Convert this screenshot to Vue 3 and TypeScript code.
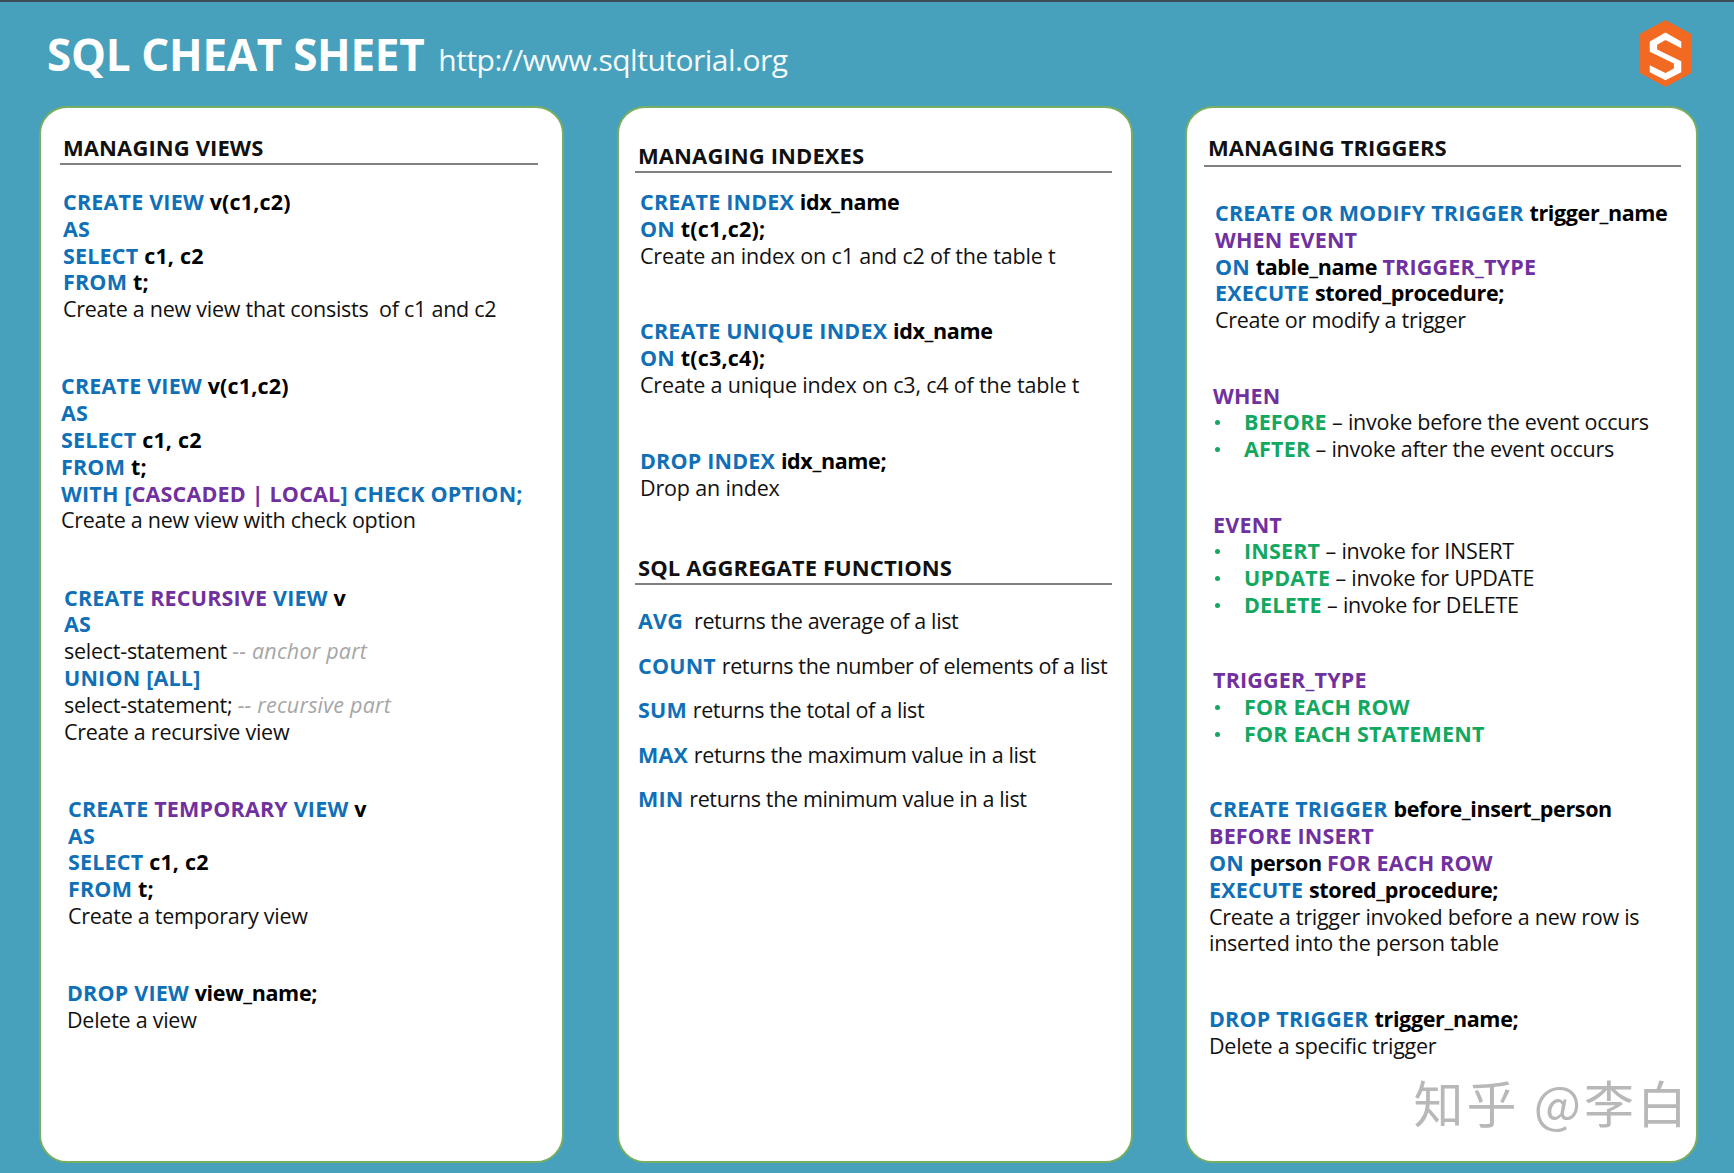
<script setup lang="ts">
type Seg = [string, string]
type Block = { indent: number; lines: Seg[][] }

const b = (text: string): Seg => ['blue', text]
const p = (text: string): Seg => ['purple', text]
const k = (text: string): Seg => ['black', text]
const id = (text: string): Seg => ['black ident', text]
const t = (text: string): Seg => ['plain', text]
const c = (text: string): Seg => ['comment', text]
const g = (text: string): Seg => ['green', text]

const views: Block[] = [
  { indent: 3, lines: [[b('CREATE VIEW '), k('v(c1,c2)')], [b('AS')], [b('SELECT '), k('c1, c2')], [b('FROM '), k('t;')], [t('Create a new view that consists  of c1 and c2')]] },
  { indent: 1, lines: [[b('CREATE VIEW '), k('v(c1,c2)')], [b('AS')], [b('SELECT '), k('c1, c2')], [b('FROM '), k('t;')], [b('WITH ['), p('CASCADED | LOCAL'), b('] CHECK OPTION;')], [t('Create a new view with check option')]] },
  { indent: 4, lines: [[b('CREATE '), p('RECURSIVE'), b(' VIEW '), k('v')], [b('AS')], [t('select-statement '), c('-- anchor part')], [b('UNION [ALL]')], [t('select-statement; '), c('-- recursive part')], [t('Create a recursive view')]] },
  { indent: 8, lines: [[b('CREATE '), p('TEMPORARY'), b(' VIEW '), k('v')], [b('AS')], [b('SELECT '), k('c1, c2')], [b('FROM '), k('t;')], [t('Create a temporary view')]] },
  { indent: 7, lines: [[b('DROP VIEW '), id('view_name;')], [t('Delete a view')]] },
]

const indexes: Block[] = [
  { indent: 5, lines: [[b('CREATE INDEX '), id('idx_name')], [b('ON '), k('t(c1,c2);')], [t('Create an index on c1 and c2 of the table t')]] },
  { indent: 5, lines: [[b('CREATE UNIQUE INDEX '), id('idx_name')], [b('ON '), k('t(c3,c4);')], [t('Create a unique index on c3, c4 of the table t')]] },
  { indent: 5, lines: [[b('DROP INDEX '), id('idx_name;')], [t('Drop an index')]] },
]

const aggregates: Seg[][] = [
  [b('AVG '), t(' returns the average of a list')],
  [b('COUNT '), t('returns the number of elements of a list')],
  [b('SUM '), t('returns the total of a list')],
  [b('MAX '), t('returns the maximum value in a list')],
  [b('MIN '), t('returns the minimum value in a list')],
]

const triggers: Block[] = [
  { indent: 11, lines: [[b('CREATE OR MODIFY TRIGGER '), id('trigger_name')], [p('WHEN EVENT')], [b('ON '), id('table_name '), p('TRIGGER_TYPE')], [b('EXECUTE '), id('stored_procedure;')], [t('Create or modify a trigger')]] },
  { indent: 9, lines: [[p('WHEN')], [g('BEFORE'), t(' – invoke before the event occurs')], [g('AFTER'), t(' – invoke after the event occurs')]] },
  { indent: 9, lines: [[p('EVENT')], [g('INSERT'), t(' – invoke for INSERT')], [g('UPDATE'), t(' – invoke for UPDATE')], [g('DELETE'), t(' – invoke for DELETE')]] },
  { indent: 9, lines: [[p('TRIGGER_TYPE')], [g('FOR EACH ROW')], [g('FOR EACH STATEMENT')]] },
  { indent: 5, lines: [[b('CREATE TRIGGER '), id('before_insert_person')], [p('BEFORE INSERT')], [b('ON '), id('person '), p('FOR EACH ROW')], [b('EXECUTE '), id('stored_procedure;')], [t('Create a trigger invoked before a new row is')], [t('inserted into the person table')]] },
  { indent: 5, lines: [[b('DROP TRIGGER '), id('trigger_name;')], [t('Delete a specific trigger')]] },
]

const isBullet = (line: Seg[]) => line[0][0] === 'green'
</script>

<template>
  <div class="sheet">
    <header class="top">
      <h1 class="title">SQL CHEAT SHEET</h1>
      <span class="url">http://www.sqltutorial.org</span>
      <svg class="logo" viewBox="28 20 154 200" aria-hidden="true">
        <polygon fill="#f26a21" points="105,20 182,62 182,178 105,220 28,178 28,62" />
        <polygon fill="#fff" points="105,57 152,84 152,104 105,80 80,94 80,108 152,143 152,176 105,200 58,176 58,155 105,178 130,165 130,150 58,115 58,84" />
      </svg>
    </header>

    <main class="cards">
      <section class="card views">
        <h2 class="heading">MANAGING VIEWS</h2>
        <div class="blocks">
          <div v-for="(block, i) in views" :key="i" class="block" :style="{ marginLeft: block.indent + 'px' }">
            <div v-for="(line, j) in block.lines" :key="j" class="line">
              <span v-for="(seg, n) in line" :key="n" :class="seg[0]">{{ seg[1] }}</span>
            </div>
          </div>
        </div>
      </section>

      <section class="card indexes">
        <h2 class="heading">MANAGING INDEXES</h2>
        <div class="blocks">
          <div v-for="(block, i) in indexes" :key="i" class="block" :style="{ marginLeft: block.indent + 'px' }">
            <div v-for="(line, j) in block.lines" :key="j" class="line">
              <span v-for="(seg, n) in line" :key="n" :class="seg[0]">{{ seg[1] }}</span>
            </div>
          </div>
        </div>
        <h2 class="heading second">SQL AGGREGATE FUNCTIONS</h2>
        <div class="aggregates">
          <div v-for="(line, j) in aggregates" :key="j" class="line">
            <span v-for="(seg, n) in line" :key="n" :class="seg[0]">{{ seg[1] }}</span>
          </div>
        </div>
      </section>

      <section class="card triggers">
        <h2 class="heading">MANAGING TRIGGERS</h2>
        <div class="blocks">
          <div v-for="(block, i) in triggers" :key="i" class="block" :style="{ marginLeft: block.indent + 'px' }">
            <div v-for="(line, j) in block.lines" :key="j" class="line" :class="{ bullet: isBullet(line) }">
              <span v-for="(seg, n) in line" :key="n" :class="seg[0]">{{ seg[1] }}</span>
            </div>
          </div>
        </div>
        <div class="watermark">知乎 @李白</div>
      </section>
    </main>
  </div>
</template>

<style>
html,
body {
  margin: 0;
  background: #47a1bc;
}
</style>

<style scoped>
.sheet {
  width: 1734px;
  height: 1173px;
  box-sizing: border-box;
  background: #47a1bc;
  border-top: 2px solid #3d4c58;
  font-family: "Open Sans", "Noto Sans", "Noto Sans CJK SC", sans-serif;
  color: #111;
  overflow: hidden;
}

.top {
  display: flex;
  align-items: baseline;
  height: 104px;
  padding-left: 47px;
  position: relative;
  color: #fff;
}

.title {
  margin: 0;
  font-size: 44px;
  font-weight: 700;
  line-height: 104px;
  letter-spacing: -0.3px;
}

.url {
  margin-left: 14px;
  font-size: 30px;
  font-weight: 400;
  letter-spacing: -0.5px;
  opacity: 0.95;
}

.logo {
  position: absolute;
  left: 1639px;
  top: 18px;
  width: 53px;
  height: 67px;
}

.cards {
  display: flex;
  padding-left: 39px;
}

.card {
  position: relative;
  height: 1057px;
  box-sizing: border-box;
  background: #fff;
  border: 2px solid #78ae5f;
  border-radius: 28px;
}

.views {
  width: 525px;
  margin-right: 53px;
  padding: 25px 24px 0 19px;
}

.indexes {
  width: 516px;
  margin-right: 52px;
  padding: 33px 19px 0 16px;
}

.triggers {
  width: 513px;
  padding: 25px 15px 0 17px;
}

.heading {
  margin: 0;
  padding: 0 0 0 3px;
  height: 30px;
  line-height: 28px;
  font-size: 22px;
  font-weight: 700;
  letter-spacing: 0.1px;
  color: #111;
  border-bottom: 2px solid #808080;
}

.triggers .heading {
  height: 32px;
  padding-left: 4px;
}

.heading.second {
  margin-top: 52px;
}

.blocks {
  padding-top: 24px;
}

.indexes .blocks {
  padding-top: 16px;
}

.triggers .blocks {
  padding-top: 33px;
}

.block {
  margin-bottom: 50.4px;
}

.indexes .block {
  margin-bottom: 49px;
}

.triggers .block {
  margin-bottom: 48.6px;
}

.line {
  height: 26.8px;
  line-height: 26.8px;
  font-size: 21.5px;
  white-space: pre;
}

.bullet {
  position: relative;
  padding-left: 31px;
}

.bullet::before {
  content: "";
  position: absolute;
  left: 2px;
  top: 11px;
  width: 5px;
  height: 5px;
  border-radius: 50%;
  background: #12a860;
}

.aggregates {
  padding: 14px 0 0 3px;
}

.aggregates .line {
  height: 44.5px;
  line-height: 44.5px;
}

.blue,
.purple,
.green,
.black {
  font-weight: 700;
  letter-spacing: 0.19px;
}

.blue {
  color: #0f70b7;
}

.purple {
  color: #7030a0;
}

.green {
  color: #12a860;
}

.black {
  color: #000;
}

.black.ident {
  letter-spacing: -0.35px;
}

.plain {
  color: #111;
  letter-spacing: -0.26px;
}

.indexes .blocks .plain {
  letter-spacing: -0.17px;
}

.aggregates .plain {
  letter-spacing: -0.36px;
}

.comment {
  color: #a6a6a6;
  font-style: italic;
  letter-spacing: 0.2px;
}

.watermark {
  position: absolute;
  right: 6px;
  bottom: 32px;
  font-family: "Noto Sans CJK SC", sans-serif;
  font-size: 50px;
  line-height: 56px;
  letter-spacing: 3px;
  color: #b8b8b8;
  white-space: pre;
}
</style>
